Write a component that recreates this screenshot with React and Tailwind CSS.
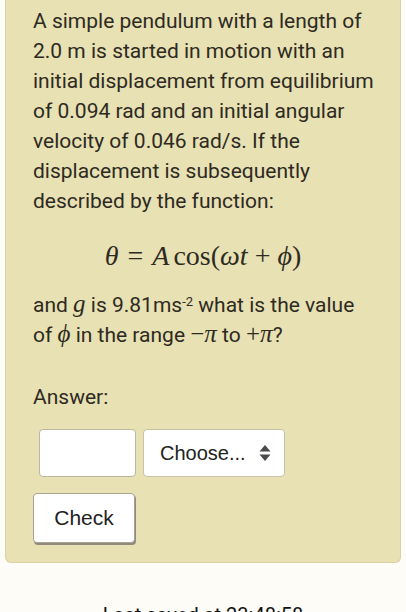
export default function App() {
  const serif = { fontFamily: '"Liberation Serif", "DejaVu Serif", serif' };

  return (
    <div className="h-[612px] w-[406px] overflow-hidden bg-[#fdfcf7] font-['Roboto',sans-serif] text-[#2e2a22]">
      <div className="mx-[5px] rounded-b-[6px] border border-t-0 border-[#d9d1a3] bg-[#e7e1b3] pb-[19px] pl-[27px] pr-[22px] pt-[6px]">
        <p className="text-[21px] leading-[30px]">
          A simple pendulum with a length of 2.0 m is started in motion with an initial displacement from
          equilibrium of 0.094 rad and an initial angular velocity of 0.046 rad/s. If the displacement is
          subsequently described by the function:
        </p>

        <div className="flex h-[74px] items-center justify-center pr-[5px] pt-[6px] text-[28px] leading-none" style={serif}>
          <span>
            <i>θ</i>
            <span className="mx-[9px]">=</span>
            <i>A</i>
            <span className="ml-[4px]">cos(</span>
            <i>ωt</i>
            <span className="mx-[7px]">+</span>
            <i>ϕ</i>
            <span>)</span>
          </span>
        </div>

        <p className="text-[21px] leading-[30px]">
          and{' '}
          <i className="text-[25px] leading-none" style={serif}>
            g
          </i>{' '}
          is 9.81ms<sup className="text-[13px] leading-none">-2</sup> what is the value of{' '}
          <i className="text-[25px] leading-none" style={serif}>
            ϕ
          </i>{' '}
          in the range{' '}
          <span className="text-[25px] leading-none" style={serif}>
            −<i>π</i>
          </span>{' '}
          to{' '}
          <span className="text-[25px] leading-none" style={serif}>
            +<i>π</i>
          </span>
          ?
        </p>

        <p className="mt-[32px] text-[21px] leading-[30px]">Answer:</p>

        <div className="ml-[6px] mt-[17px] flex gap-[7px] font-['Liberation_Sans',sans-serif]">
          <div className="h-[48px] w-[97px] rounded-[4px] border border-[#bdb7a0] bg-white" />
          <div className="flex h-[48px] w-[142px] items-center justify-between rounded-[4px] border border-[#c9c2a6] bg-white pl-[16px] pr-[13px] text-[20px] text-[#222]">
            <span>Choose...</span>
            <svg width="12" height="18" viewBox="0 0 12 18">
              <path d="M6 1 L11.5 7.5 H0.5 Z" fill="#4a4a4a" />
              <path d="M6 17 L11.5 10.5 H0.5 Z" fill="#4a4a4a" />
            </svg>
          </div>
        </div>

        <button className="mt-[16px] flex h-[50px] w-[102px] items-center justify-center rounded-[4px] border border-[#a9a392] bg-white font-['Liberation_Sans',sans-serif] text-[21px] text-[#222] shadow-[1px_2px_0_#8f8a7c]">
          Check
        </button>
      </div>

      <p className="mt-[37px] text-center text-[20px] leading-[30px] text-[#111]">Last saved at 23:48:58</p>
    </div>
  );
}
